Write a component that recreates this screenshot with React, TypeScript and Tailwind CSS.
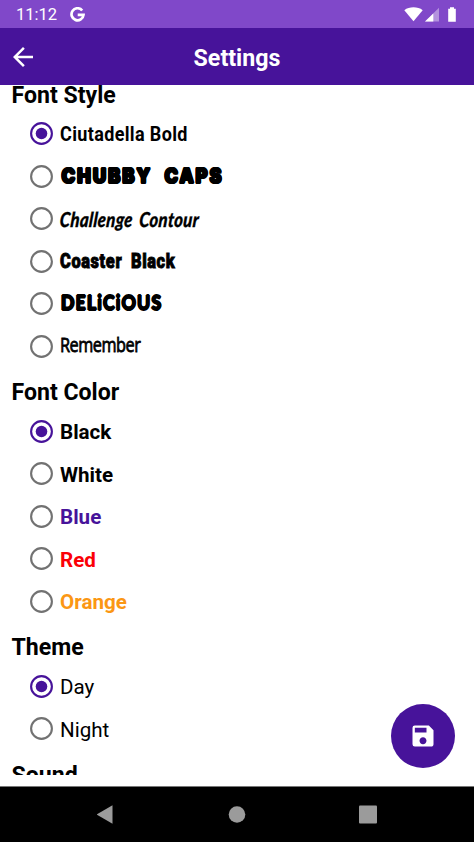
import { useState } from 'react'
import { MdArrowBack, MdSave } from 'react-icons/md'

interface Option {
  label: string
  className: string
}

interface RadioSectionProps {
  title: string
  options: Option[]
  initial: string
}

const fontStyles: Option[] = [
  {
    label: 'Ciutadella Bold',
    className: "relative -top-px font-['Roboto'] font-bold text-[19.5px] tracking-[0.4px] scale-x-[0.875]",
  },
  {
    label: 'CHUBBY CAPS',
    className:
      "relative -top-px pl-[2px] font-['Inter'] font-extrabold text-[15.5px] tracking-[2.6px] [word-spacing:7px] scale-x-[0.87] [text-shadow:1.4px_0_0_#000,-1.4px_0_0_#000,0_1px_0_#000,0_-1px_0_#000,1px_0.8px_0_#000,-1px_0.8px_0_#000,1px_-0.8px_0_#000,-1px_-0.8px_0_#000]",
  },
  {
    label: 'Challenge Contour',
    className:
      "relative -top-px font-['Lato'] italic font-black text-[17px] tracking-[0.4px] scale-x-[0.81] [word-spacing:3px] [-webkit-text-stroke:0.3px_black] skew-x-[-6deg]",
  },
  {
    label: 'Coaster Black',
    className:
      "relative -top-px font-['Roboto'] font-black text-[20.5px] scale-x-[0.795] [word-spacing:5px] tracking-[0.8px] [-webkit-text-stroke:0.9px_black]",
  },
  {
    label: 'DELiCiOUS',
    className:
      "relative -top-[3px] pl-px font-['Lato'] font-black text-[17px] tracking-[1.3px] scale-x-[0.865] [text-shadow:0.9px_0_0_#000,-0.9px_0_0_#000,0_0.6px_0_#000,0_-0.6px_0_#000]",
  },
  {
    label: 'Remember',
    className:
      "relative -top-[3px] font-['Open_Sans'] font-medium text-[19.5px] tracking-[-0.6px] scale-x-[0.79] [-webkit-text-stroke:0.8px_black]",
  },
]

const fontColors: Option[] = [
  { label: 'Black', className: 'font-bold text-black' },
  { label: 'White', className: 'font-bold text-black' },
  { label: 'Blue', className: 'font-bold text-[#47139a]' },
  { label: 'Red', className: 'font-bold text-[#fb0007]' },
  { label: 'Orange', className: 'font-bold text-[#fb9714]' },
]

const themes: Option[] = [
  { label: 'Day', className: 'font-normal text-black' },
  { label: 'Night', className: 'font-normal text-black' },
]

const StatusBar = () => (
  <div className="flex h-7 shrink-0 items-center bg-[#8048c9] px-4 text-white">
    <span className="mt-px text-[16.5px] leading-7">11:12</span>
    <svg className="ml-[13px] size-[15px]" viewBox="0 0 15 15" fill="none" stroke="currentColor" strokeWidth="2.7">
      <path d="M12.2 3.5A6 6 0 1 0 13.5 7.8H7.7" />
    </svg>
    <svg className="ml-auto h-[15px] w-[54px]" viewBox="0 0 54 15" fill="currentColor">
      <path d="M0.3 3.2C5.3-.6 13.7-.6 18.7 3.2L9.5 14.2Z" />
      <path d="M35 .7V14.6H21Z" opacity=".4" />
      <path d="M29.3 6.4V14.6H21Z" />
      <path d="M44.2 1.8H46V0.2H50V1.8H51.8V14.8H44.2Z" />
    </svg>
  </div>
)

const Radio = ({ checked }: { checked: boolean }) => (
  <svg
    className={checked ? 'size-[23px] shrink-0 text-[#47139a]' : 'size-[23px] shrink-0 text-[#727272]'}
    viewBox="0 0 23 23"
  >
    <circle cx="11.5" cy="11.5" r="10.4" fill="none" stroke="currentColor" strokeWidth="2.1" />
    {checked && <circle cx="11.5" cy="11.5" r="5.8" fill="currentColor" />}
  </svg>
)

const RadioSection = ({ title, options, initial }: RadioSectionProps) => {
  const [selected, setSelected] = useState(initial)

  return (
    <section>
      <h2 className="h-[42.5px] pl-[11.5px] pt-[9.6px] text-[23.1px] leading-[32px] font-bold">{title}</h2>
      {options.map((option) => (
        <button
          key={option.label}
          onClick={() => setSelected(option.label)}
          className="flex h-[42.5px] w-full cursor-pointer items-center pl-[30px] text-left"
        >
          <Radio checked={selected === option.label} />
          <span className={`ml-[7px] mt-[2px] origin-left whitespace-nowrap text-[20.6px] leading-7 ${option.className}`}>
            {option.label}
          </span>
        </button>
      ))}
    </section>
  )
}

export default function App() {
  return (
    <div className="relative flex h-[842px] w-[474px] flex-col overflow-hidden bg-white font-['Roboto',sans-serif] text-black">
      <StatusBar />
      <header className="grid h-[57px] shrink-0 grid-cols-[1fr_auto_1fr] items-center bg-[#47139a] px-[10px] text-white">
        <MdArrowBack className="-ml-[2px] size-[30px]" />
        <h1 className="pt-[3px] text-[23.2px] leading-7 font-bold">Settings</h1>
      </header>
      <main className="h-[690px] shrink-0 overflow-hidden">
        <div className="-mt-[15px]">
          <RadioSection title="Font Style" options={fontStyles} initial="Ciutadella Bold" />
          <RadioSection title="Font Color" options={fontColors} initial="Black" />
          <RadioSection title="Theme" options={themes} initial="Day" />
          <RadioSection title="Sound" options={[]} initial="" />
        </div>
      </main>
      <button className="absolute left-[391px] top-[704px] flex size-[64px] items-center justify-center rounded-full bg-[#47139a] text-white">
        <MdSave className="size-[28px]" />
      </button>
      <nav className="mt-auto flex h-14 shrink-0 items-center justify-center border-t border-[#777] bg-black text-[#9b9b9b]">
        <svg className="h-5 w-[280px]" viewBox="0 0 280 20" fill="currentColor">
          <path d="M15.5.3V18.7L-.5 9.5Z" />
          <circle cx="140" cy="9.5" r="8.3" />
          <rect x="262" y=".5" width="18" height="18" rx="1" />
        </svg>
      </nav>
    </div>
  )
}
